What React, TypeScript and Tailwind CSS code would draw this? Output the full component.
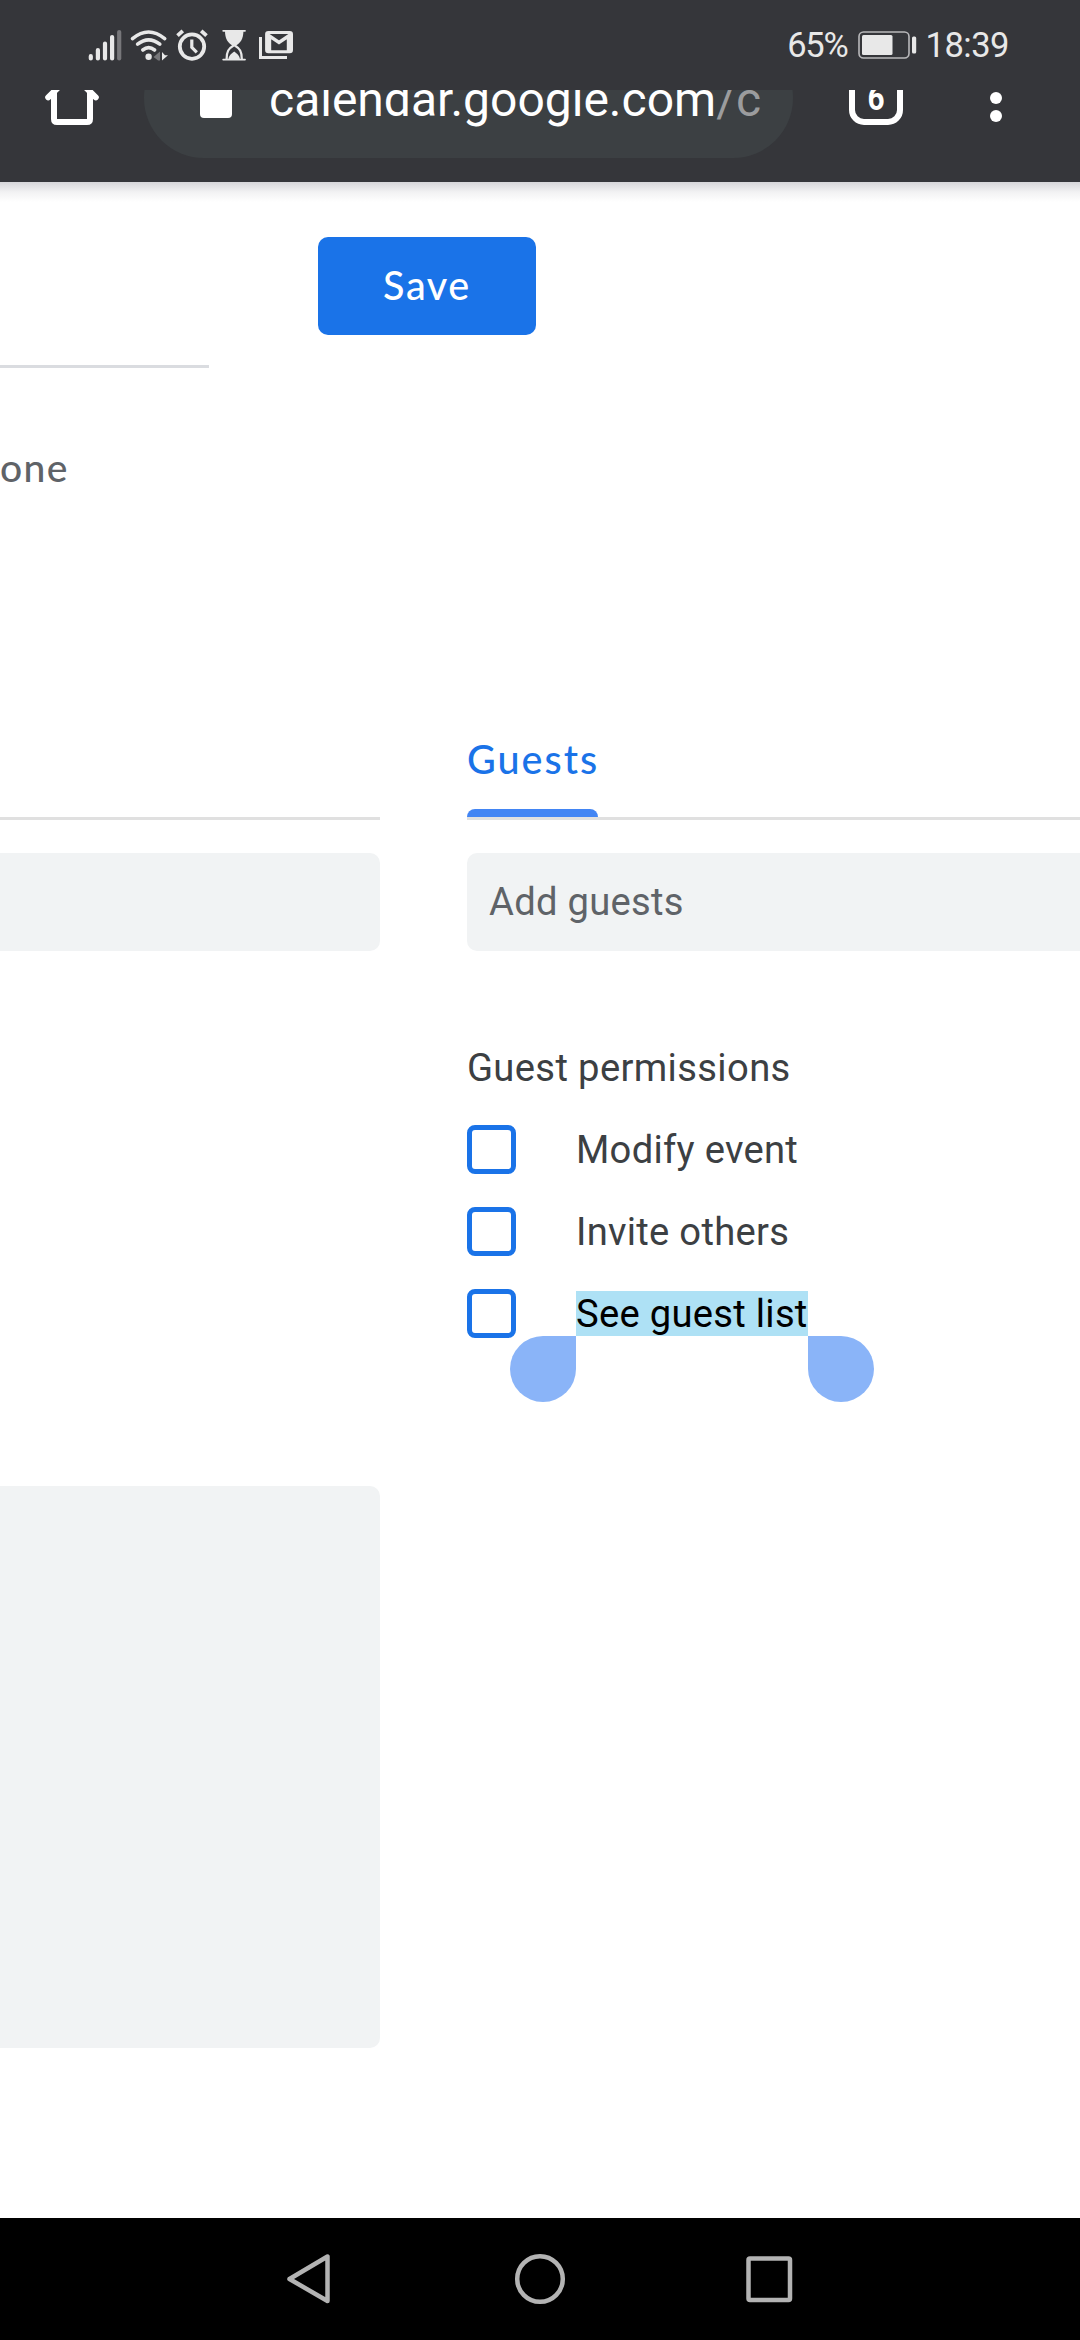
import clsx from 'clsx'
import { useState } from 'react'

const StatusBar = () => {
  return (
    <div className="flex h-[90px] shrink-0 items-start justify-between text-[#e8e8e8]">
      <svg className="h-[90px] w-[300px]" viewBox="0 0 300 90" fill="none" stroke="currentColor" strokeLinecap="round">
        {/* signal */}
        <g strokeWidth="4.2">
          <path d="M90.8 56.2v2.2M97.9 50v8.4M105 43.5v14.9M112.1 37v21.4" />
          <path d="M119.2 32v26.4" stroke="#77777a" />
        </g>
        {/* wifi */}
        <g strokeWidth="3.6">
          <path d="M132.5 38.6q16-13.2 32.2 0" />
          <path d="M137.6 44.2q11-8.8 22.2 0" />
          <path d="M142.8 50q5.8-4.6 11.8 0" />
        </g>
        <g stroke="none" fill="currentColor">
          <circle cx="148.6" cy="56.8" r="3.2" />
          <path d="M160 51.5v9h-1.8L153.5 57z" fill="#77777a" />
          <path d="M162 52l3 3.3h3L162 60.5z" />
        </g>
        {/* alarm */}
        <g strokeWidth="3.8" strokeLinecap="butt">
          <circle cx="192" cy="46.6" r="12.2" />
          <path d="M177.5 35.6l5.3-4.8M206.500 35.600l-5.300-4.800" />
          <path d="M191.8 39.5v7.8l5 5" strokeWidth="3.2" />
        </g>
        {/* hourglass */}
        <path d="M223.2 30.8h21.8M223.2 59.6h21.8" strokeWidth="1.8" />
        <path d="M225 31h18.4c0 8-3 12-8 15h-2.4c-5-3-8-7-8-15z" fill="currentColor" stroke="none" />
        <path d="M233.6 45.5c-5 3-7 6-7 13.5M234.8 45.5c5 3 7 6 7 13.5" strokeWidth="2.2" />
        <path d="M228.5 59c.5-4 3.2-5.5 5.7-7.5 2.5 2 5.2 3.5 5.7 7.5z" fill="currentColor" stroke="none" />
        {/* stacked mail */}
        <path d="M260.5 37v20.500h26.500" strokeWidth="3" strokeLinecap="butt" />
        <rect x="266.600" y="32.500" width="24.900" height="19.200" rx="1.800" strokeWidth="3" />
        <path d="M269.500 52V36l9.500 6.500 9.500-6.500V52" strokeWidth="3.4" strokeLinecap="butt" />
      </svg>
      <div className="flex h-[90px] items-center pr-[71px] text-[34.5px] leading-none">
        <span className="tracking-[-1.2px]">65%</span>
        <svg className="ml-[10px] h-[28px] w-[60px]" viewBox="0 0 60 28" fill="none">
          <rect x="1" y="1" width="50" height="26" rx="4.5" stroke="#b9b9bb" strokeWidth="1.6" />
          <rect x="4" y="4" width="30.5" height="20" rx="1.5" fill="currentColor" />
          <rect x="54" y="5.5" width="4.2" height="17" rx="1.5" fill="currentColor" />
        </svg>
        <span className="ml-[8px] tracking-[-0.5px]">18:39</span>
      </div>
    </div>
  )
}

// The toolbar is scrolled partly under the status bar, so its top edge is cut off
const Toolbar = () => {
  return (
    <div className="flex h-[92px] shrink-0 items-end overflow-hidden">
      <div className="flex h-[168px] w-full shrink-0 items-center">
        <svg className="ml-9 size-[72px]" viewBox="0 0 72 72" fill="none" stroke="white" strokeWidth="6" strokeLinecap="round" strokeLinejoin="round">
          <path d="M12.2 35.3L36 12l23.8 23.3" />
          <path d="M18 30v27q0 3 3 3h30q3 0 3-3V30" strokeLinecap="butt" />
        </svg>
        <div className="ml-9 flex h-[120px] w-[649px] items-center rounded-full bg-[#3c4043] pl-14">
          <div className="mt-[-2px] h-[42px] w-8 rounded-[4px] bg-white" />
          <div className="mt-[3px] ml-[37px] text-[48px] leading-none whitespace-nowrap text-white">
            calendar.google.com<span className="text-[#9b9c9e]">/c</span>
          </div>
        </div>
        <div className="ml-14 flex size-[54px] items-center justify-center rounded-[15px] border-[6px] border-white text-white">
          <span className="scale-x-[0.85] text-[35px] leading-none font-bold">6</span>
        </div>
        <div className="ml-[87px] flex flex-col gap-1.5">
          <div className="size-3 rounded-full bg-white" />
          <div className="size-3 rounded-full bg-white" />
          <div className="size-3 rounded-full bg-white" />
        </div>
      </div>
    </div>
  )
}

interface PermissionProps {
  label: string;
  selected?: boolean;
}

const Permission = ({ label, selected }: PermissionProps) => {
  const [checked, setChecked] = useState(false)

  return (
    <label className="flex h-[81.7px] items-center">
      <input
        type="checkbox"
        checked={checked}
        onChange={() => setChecked(!checked)}
        className="size-[49px] appearance-none rounded-[8px] border-[5.5px] border-[#1a73e8] checked:bg-[#1a73e8]"
      />
      <span className={clsx('relative ml-[60px] h-[45px] text-[38.2px] leading-[46px] tracking-[0.27px]', selected && 'bg-[#aee1f5] text-black')}>
        {label}
        {selected && <>
          <span className="absolute top-full right-full size-[66px] rounded-full rounded-tr-none bg-[#8ab4f8]" />
          <span className="absolute top-full left-full size-[66px] rounded-full rounded-tl-none bg-[#8ab4f8]" />
        </>}
      </span>
    </label>
  )
}

const Page = () => {
  return (
    <div className="flex min-h-0 flex-1 flex-col overflow-hidden bg-white">
      <div className="h-5 shrink-0 bg-linear-to-b from-[#d6d6d9] via-[#f2f2f3] via-50% to-white" />
      <div className="flex h-[166px] shrink-0 items-start">
        <div className="mt-[163px] h-[3px] w-[209px] bg-[#dadce0]" />
        <button className="mt-[35px] ml-[109px] h-[98px] w-[218px] rounded-[10px] bg-[#1a73e8] pb-[3px] font-['Lato'] text-[39.5px] font-medium tracking-[1.6px] text-white">
          Save
        </button>
      </div>
      <div className="mt-[75px] h-12 shrink-0 font-['Lato'] text-[39px] leading-[48px] font-medium tracking-[1.4px] text-[#5f6368]">one</div>
      <div className="mt-[235px] flex">
        <div className="w-[380px]">
          <div className="mt-[91px] h-[3px] bg-[#e0e0e0]" />
          <div className="mt-[33px] h-[98px] rounded-r-[10px] bg-[#f1f3f4]" />
          <div className="mt-[535px] h-[562px] rounded-r-[10px] bg-[#f1f3f4]" />
        </div>
        <div className="ml-[87px] w-[613px] text-[#3c4043]">
          <div className="flex h-[94px] items-end border-b-[3px] border-[#e0e0e0]">
            <div className="flex h-[91px] w-[131px] flex-col justify-between">
              <div className="mt-[9px] font-['Lato'] text-[39.5px] leading-[48px] font-medium tracking-[2px] text-[#1a73e8]">Guests</div>
              <div className="h-2 rounded-t-[8px] bg-[#4285f4]" />
            </div>
          </div>
          <div className="mt-[33px] flex h-[98px] items-center rounded-l-[10px] bg-[#f1f3f4] pt-[2px] pl-[22px] text-[38.2px] tracking-[0.27px] text-[#5f6368]">
            Add guests
          </div>
          <div className="mt-[94px] h-[45px] text-[38.2px] leading-[47px] tracking-[0.35px]">Guest permissions</div>
          <div className="mt-[19px]">
            <Permission label="Modify event" />
            <Permission label="Invite others" />
            <Permission label="See guest list" selected />
          </div>
        </div>
      </div>
    </div>
  )
}

const NavBar = () => {
  return (
    <div className="flex h-[122px] shrink-0 items-center justify-center bg-black">
      <svg className="h-[122px] w-[540px]" viewBox="270 0 540 122" fill="none" stroke="#b3b3b3" strokeWidth="4.5" strokeLinejoin="round">
        <path d="M327.5 38.5v44.5L289.5 61z" />
        <circle cx="540" cy="61" r="22.8" />
        <rect x="748.5" y="40.5" width="41.5" height="41.5" rx="1.5" />
      </svg>
    </div>
  )
}

const App = () => {
  return (
    <div className="flex h-[2340px] w-[1080px] flex-col overflow-hidden bg-[#35363a] font-['Roboto',sans-serif]">
      <StatusBar />
      <Toolbar />
      <Page />
      <NavBar />
    </div>
  )
}

export default App
